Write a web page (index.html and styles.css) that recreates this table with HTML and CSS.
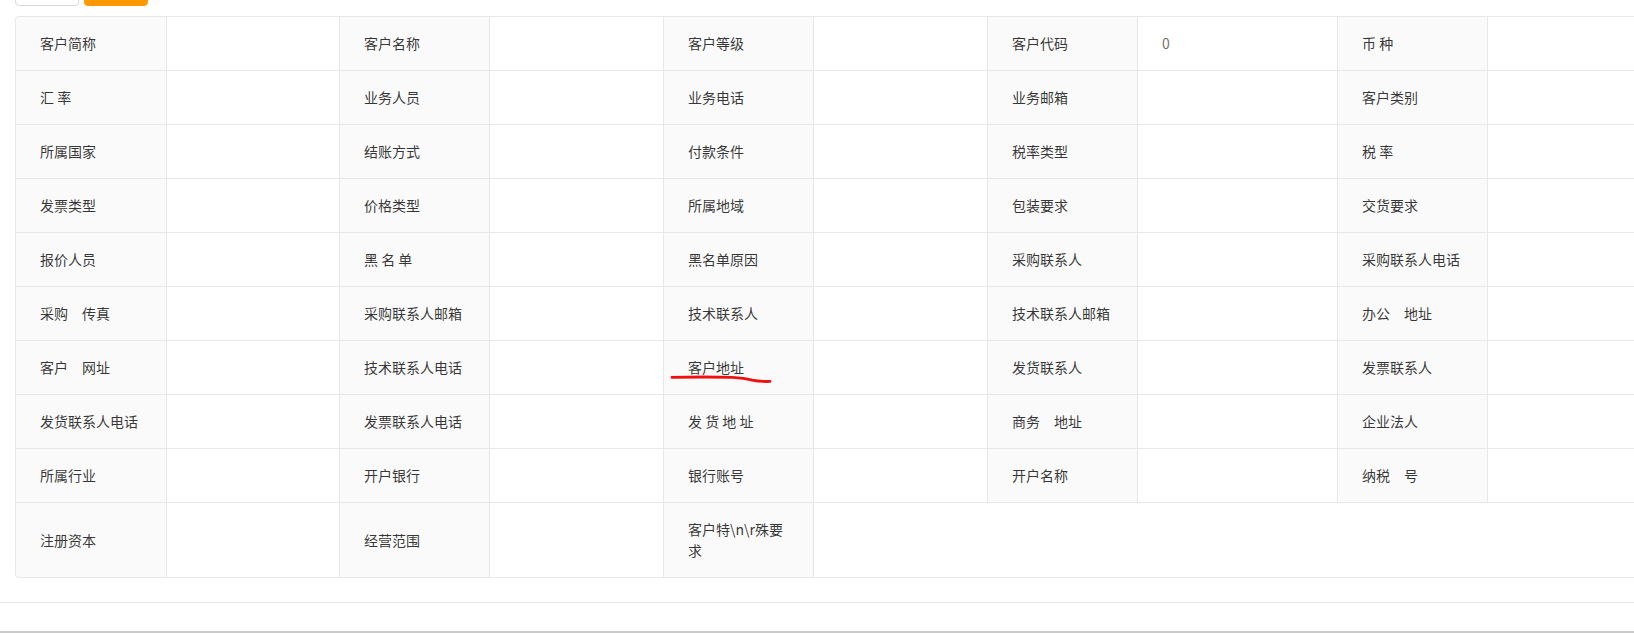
FILE: index.html
```html
<!DOCTYPE html>
<html lang="zh-CN">
<head>
<meta charset="utf-8">
<title>客户详情</title>
<link rel="stylesheet" href="styles.css">
</head>
<body>
<div class="toolbar">
  <button class="btn btn-default" type="button"></button>
  <button class="btn btn-primary" type="button"></button>
</div>
<div class="wrap">
  <div class="desc">
    <div class="label">客户简称</div><div class="value"></div>
    <div class="label">客户名称</div><div class="value"></div>
    <div class="label">客户等级</div><div class="value"></div>
    <div class="label">客户代码</div><div class="value">0</div>
    <div class="label">币 种</div><div class="value"></div>

    <div class="label">汇 率</div><div class="value"></div>
    <div class="label">业务人员</div><div class="value"></div>
    <div class="label">业务电话</div><div class="value"></div>
    <div class="label">业务邮箱</div><div class="value"></div>
    <div class="label">客户类别</div><div class="value"></div>

    <div class="label">所属国家</div><div class="value"></div>
    <div class="label">结账方式</div><div class="value"></div>
    <div class="label">付款条件</div><div class="value"></div>
    <div class="label">税率类型</div><div class="value"></div>
    <div class="label">税 率</div><div class="value"></div>

    <div class="label">发票类型</div><div class="value"></div>
    <div class="label">价格类型</div><div class="value"></div>
    <div class="label">所属地域</div><div class="value"></div>
    <div class="label">包装要求</div><div class="value"></div>
    <div class="label">交货要求</div><div class="value"></div>

    <div class="label">报价人员</div><div class="value"></div>
    <div class="label">黑 名 单</div><div class="value"></div>
    <div class="label">黑名单原因</div><div class="value"></div>
    <div class="label">采购联系人</div><div class="value"></div>
    <div class="label">采购联系人电话</div><div class="value"></div>

    <div class="label">采购　传真</div><div class="value"></div>
    <div class="label">采购联系人邮箱</div><div class="value"></div>
    <div class="label">技术联系人</div><div class="value"></div>
    <div class="label">技术联系人邮箱</div><div class="value"></div>
    <div class="label">办公　地址</div><div class="value"></div>

    <div class="label">客户　网址</div><div class="value"></div>
    <div class="label">技术联系人电话</div><div class="value"></div>
    <div class="label marked"><span>客户地址</span><svg class="scribble" width="104" height="12" viewBox="0 0 104 12"><path d="M2 3.4 Q 35 2.6 62 3.4 Q 74 4 82 6.2 Q 90 7.8 100 7.4" fill="none" stroke="#f01010" stroke-width="2.8" stroke-linecap="round"/></svg></div><div class="value"></div>
    <div class="label">发货联系人</div><div class="value"></div>
    <div class="label">发票联系人</div><div class="value"></div>

    <div class="label">发货联系人电话</div><div class="value"></div>
    <div class="label">发票联系人电话</div><div class="value"></div>
    <div class="label">发 货 地 址</div><div class="value"></div>
    <div class="label">商务　地址</div><div class="value"></div>
    <div class="label">企业法人</div><div class="value"></div>

    <div class="label">所属行业</div><div class="value"></div>
    <div class="label">开户银行</div><div class="value"></div>
    <div class="label">银行账号</div><div class="value"></div>
    <div class="label">开户名称</div><div class="value"></div>
    <div class="label">纳税　号</div><div class="value"></div>

    <div class="label">注册资本</div><div class="value"></div>
    <div class="label">经营范围</div><div class="value"></div>
    <div class="label">客户特\n\r殊要求</div><div class="value span-rest"></div>
  </div>
</div>
<div class="footer"></div>
<div class="bottom-bar"></div>
</body>
</html>
```

FILE: styles.css
```css
html, body {
  margin: 0;
  padding: 0;
  overflow: hidden;
  background: #fff;
}
body {
  font-family: "Noto Sans CJK SC", "Noto Sans", sans-serif;
  font-size: 14px;
  color: rgba(0, 0, 0, 0.8);
}
.toolbar {
  height: 6px;
  overflow: hidden;
  display: flex;
  align-items: flex-end;
  gap: 5px;
  padding-left: 15px;
}
.btn {
  flex: none;
  width: 64px;
  height: 32px;
  border-radius: 4px;
  padding: 0;
  box-sizing: border-box;
}
.btn-default {
  background: #fff;
  border: 1px solid #d9d9d9;
}
.btn-primary {
  background: #ff9900;
  border: 1px solid #ff9900;
}
.wrap {
  margin-top: 10px;
  padding-left: 15px;
  overflow: hidden;
}
.desc {
  display: grid;
  width: max-content;
  grid-template-columns: 150px 172px 149px 173px 149px 173px 149px 199px 149px 280px;
  gap: 1px;
  padding: 1px;
  background: #e8e8e8;
  border-radius: 4px;
}
.label, .value {
  display: flex;
  align-items: center;
  padding: 16px 24px;
  line-height: 21px;
  min-width: 0;
}
.label {
  background: #fafafa;
  color: rgba(0, 0, 0, 0.8);
  white-space: pre-wrap;
}
.value {
  background: #fff;
  color: rgba(0, 0, 0, 0.6);
}
.desc > .label:first-child {
  border-top-left-radius: 3px;
}
.desc > .label:nth-last-child(6) {
  border-bottom-left-radius: 3px;
}
.span-rest {
  grid-column: 6 / -1;
}
.marked {
  position: relative;
}
.scribble {
  position: absolute;
  left: 6px;
  top: 33px;
}
.footer {
  margin-top: 24px;
  height: 28px;
  border-top: 1px solid #e8e8e8;
}
.bottom-bar {
  height: 2px;
  background: #cacaca;
}
```
